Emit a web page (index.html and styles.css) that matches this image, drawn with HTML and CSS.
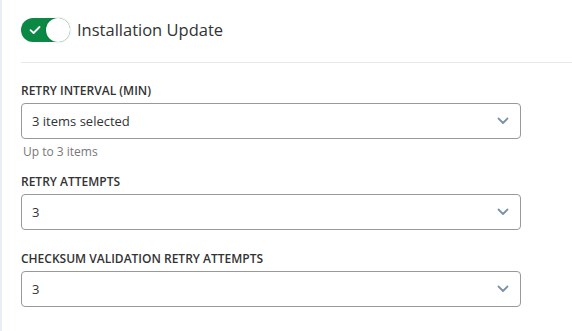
FILE: index.html
```html
<!DOCTYPE html>
<html>
<head>
<meta charset="utf-8">
<link rel="stylesheet" href="styles.css">
</head>
<body>
<div class="panel">
  <div class="header">
    <div class="toggle">
      <svg class="check" width="12" height="10" viewBox="0 0 12 10"><path d="M1.5 5.2 L4.6 8 L10.5 2" fill="none" stroke="#fff" stroke-width="1.8" stroke-linecap="round" stroke-linejoin="round"/></svg>
      <span class="knob"></span>
    </div>
    <span class="title">Installation Update</span>
  </div>
  <div class="divider"></div>
  <div class="field">
    <div class="label">RETRY INTERVAL (MIN)</div>
    <div class="select"><span>3 items selected</span><svg class="chev" width="12" height="8" viewBox="0 0 12 8"><path d="M1.5 1.5 L6 6 L10.5 1.5" fill="none" stroke="#7b93a8" stroke-width="1.8" stroke-linecap="round" stroke-linejoin="round"/></svg></div>
    <div class="hint">Up to 3 items</div>
  </div>
  <div class="field field-tight">
    <div class="label">RETRY ATTEMPTS</div>
    <div class="select"><span>3</span><svg class="chev" width="12" height="8" viewBox="0 0 12 8"><path d="M1.5 1.5 L6 6 L10.5 1.5" fill="none" stroke="#7b93a8" stroke-width="1.8" stroke-linecap="round" stroke-linejoin="round"/></svg></div>
  </div>
  <div class="field field-loose">
    <div class="label">CHECKSUM VALIDATION RETRY ATTEMPTS</div>
    <div class="select"><span>3</span><svg class="chev" width="12" height="8" viewBox="0 0 12 8"><path d="M1.5 1.5 L6 6 L10.5 1.5" fill="none" stroke="#7b93a8" stroke-width="1.8" stroke-linecap="round" stroke-linejoin="round"/></svg></div>
  </div>
</div>
</body>
</html>
```
FILE: styles.css
```css
html, body {
  margin: 0;
  padding: 0;
  background: #fff;
}
body {
  font-family: "Open Sans", "Noto Sans", sans-serif;
  color: #333;
}
.panel {
  border-left: 2px solid #e8eef6;
  padding-left: 19px;
  height: 331px;
  box-sizing: border-box;
}
.header {
  display: flex;
  align-items: center;
  gap: 7px;
  padding-top: 18px;
}
.toggle {
  position: relative;
  width: 49px;
  height: 24px;
  border-radius: 12px;
  background: #0b8843;
  flex: none;
}
.check {
  position: absolute;
  left: 8px;
  top: 7px;
}
.knob {
  position: absolute;
  right: 0;
  top: 0;
  width: 24px;
  height: 24px;
  border-radius: 50%;
  background: #fff;
  box-shadow: 0 0 2px rgba(0,0,0,0.25);
}
.title {
  font-size: 16.5px;
  color: #333;
  line-height: 24px;
}
.divider {
  height: 1px;
  background: #e6e9ec;
  margin-top: 20px;
}
.field {
  margin-top: 20px;
}
.field-tight {
  margin-top: 14px;
}
.field-loose {
  margin-top: 21px;
}
.label {
  font-size: 12px;
  font-weight: 600;
  color: #333;
  line-height: 16px;
}
.select {
  margin-top: 4px;
  width: 500px;
  height: 36px;
  box-sizing: border-box;
  border: 1px solid #999;
  border-radius: 4px;
  display: flex;
  align-items: center;
  justify-content: space-between;
  padding: 0 11px 0 10px;
  font-size: 13px;
  color: #333;
}
.hint {
  margin-top: 5px;
  font-size: 12px;
  color: #777;
  padding-left: 2px;
  line-height: 16px;
}
```
